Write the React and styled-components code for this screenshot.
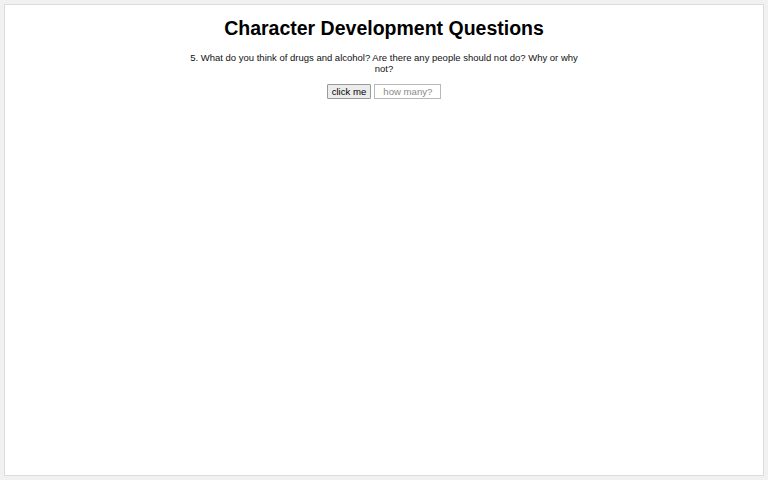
import styled, { createGlobalStyle } from 'styled-components';

const GlobalStyle = createGlobalStyle`
  html, body {
    margin: 0;
    padding: 0;
    background-color: #f1f1f1;
    font-family: "Liberation Sans", Arial, sans-serif;
  }
`;

const Page = styled.div`
  padding: 4px;
  height: 480px;
  box-sizing: border-box;
`;

const Card = styled.main`
  height: 472px;
  box-sizing: border-box;
  background-color: #fff;
  border: 1px solid #dcdcdc;
  display: flex;
  flex-direction: column;
  align-items: center;
  padding-top: 12px;
`;

const Title = styled.h1`
  margin: 0;
  font-size: 19.5px;
  font-weight: 700;
  color: #000;
`;

const Question = styled.p`
  margin: 12px 0 0;
  width: 392px;
  text-align: center;
  font-size: 9.5px;
  line-height: 11px;
  color: #111;
`;

const Controls = styled.div`
  display: flex;
  gap: 3px;
  margin-top: 10px;
`;

const Button = styled.button`
  font-family: "Liberation Sans", Arial, sans-serif;
  font-size: 9.6px;
  height: 15px;
  padding: 0 4px;
  border: 1px solid #9a9a9a;
  border-radius: 1px;
  background-color: #ececec;
  color: #000;
`;

const Input = styled.input`
  font-family: "Liberation Sans", Arial, sans-serif;
  font-size: 9.6px;
  height: 15px;
  width: 67px;
  box-sizing: border-box;
  padding: 0 4px;
  border: 1px solid #b8b8b8;
  text-align: center;
  &::placeholder {
    color: #8a8a8a;
  }
`;

export default function App() {
  return (
    <>
      <GlobalStyle />
      <Page>
        <Card>
          <Title>Character Development Questions</Title>
          <Question>
            5. What do you think of drugs and alcohol? Are there any people should not do? Why or why not?
          </Question>
          <Controls>
            <Button>click me</Button>
            <Input placeholder="how many?" />
          </Controls>
        </Card>
      </Page>
    </>
  );
}
